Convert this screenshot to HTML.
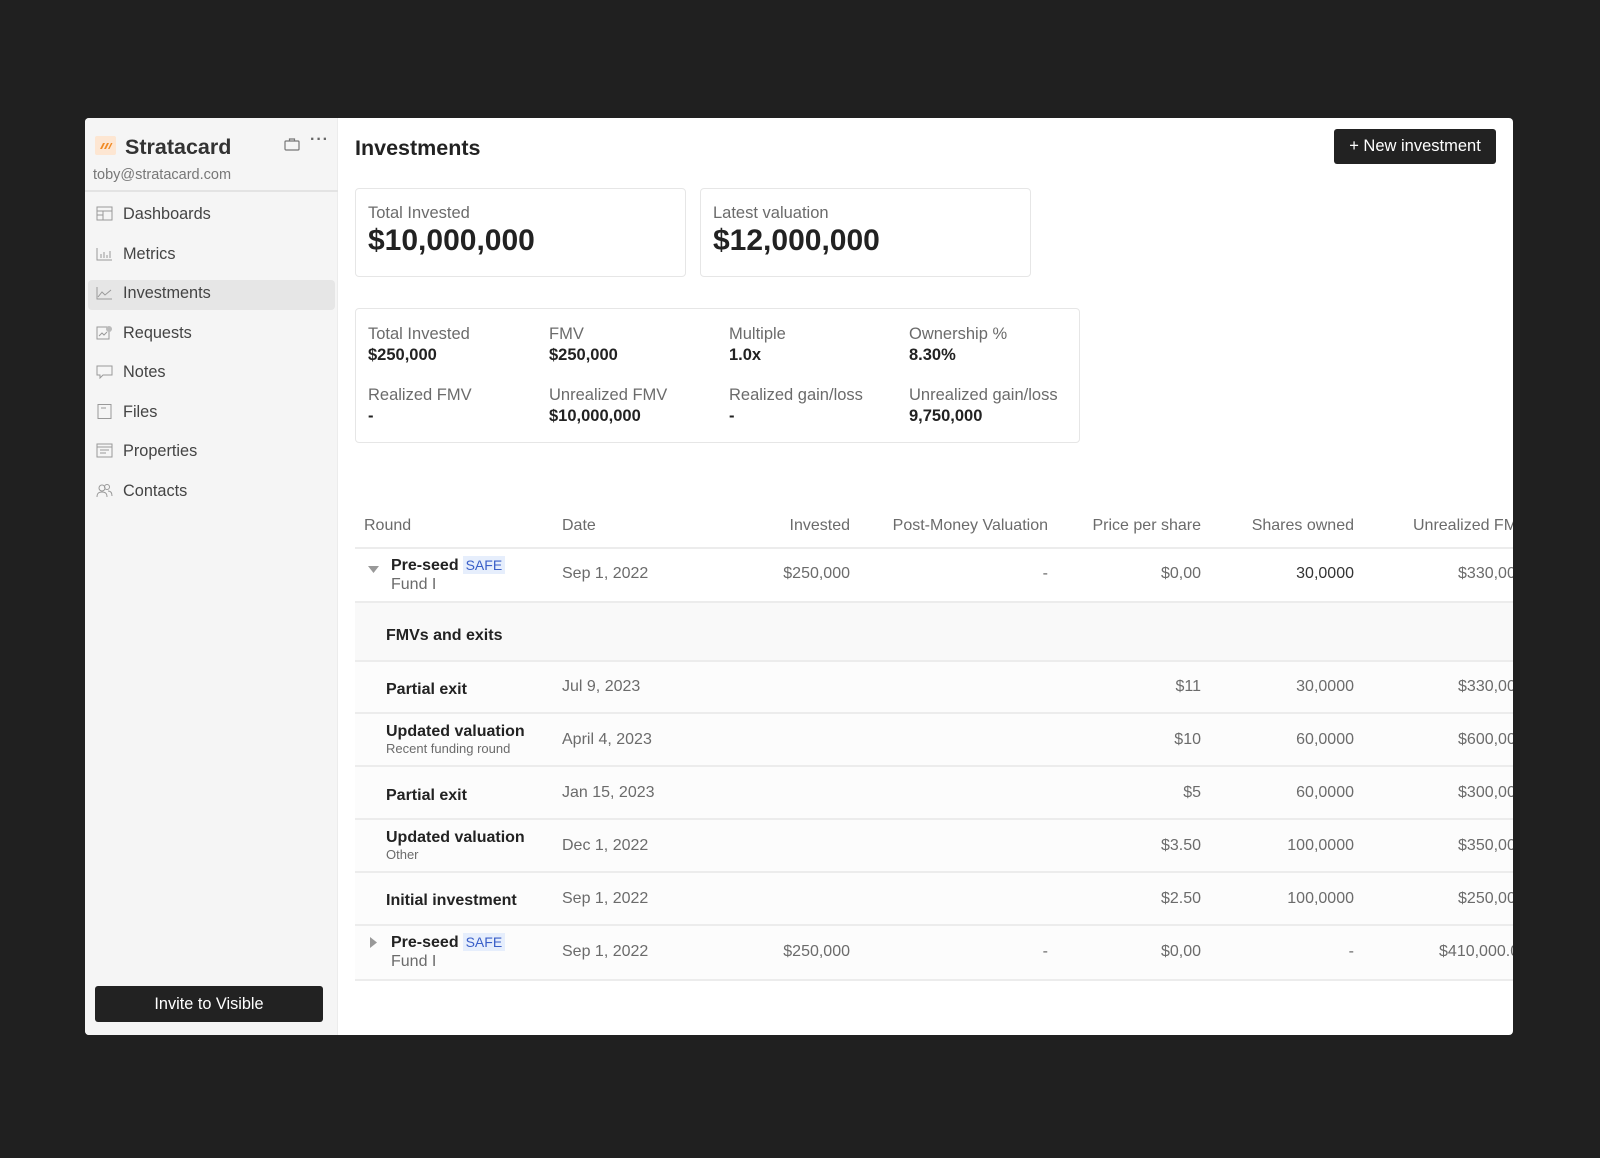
<!DOCTYPE html>
<html><head><meta charset="utf-8"><style>
*{margin:0;padding:0;box-sizing:border-box}
body{width:1600px;height:1158px;background:#202020;font-family:"Liberation Sans",sans-serif;position:relative;overflow:hidden}
#p{position:absolute;left:85px;top:118px;width:1428px;height:917px;background:#fff;border-radius:4px;overflow:hidden}
#sb{position:absolute;left:0;top:0;width:253px;height:917px;background:#f5f5f5;border-right:1px solid #ececec}
.a{position:absolute;white-space:nowrap;line-height:20px}
.r{text-align:right}
.g{color:#6b6b6b}
.d{color:#222}
.b{font-weight:bold}
.nav{position:absolute;left:38px;font-size:16.3px;color:#444;line-height:20px}
.ic{position:absolute;left:11px;width:17px;height:15px}
.line{position:absolute;left:270px;width:1160px;height:2px;background:#ececec}
.card{position:absolute;border:1px solid #e6e6e6;border-radius:4px;background:#fff}
.safe{background:#e6eefc;color:#3a5fc8;font-size:14px;padding:1px 3px;margin-left:4px;font-weight:normal}
.t{font-size:16px}
.lb{font-size:16.5px}
.vl{font-size:16.5px}
</style></head><body>
<div id="p">
<div id="sb">
  <svg style="position:absolute;left:10px;top:18px" width="21" height="19" viewBox="0 0 21 19"><rect width="21" height="19" rx="2" fill="#fde6d2"/><path d="M5 13l3-6h2l-3 6zM9 13l3-6h2l-3 6zM13 13l3-6h1.5l-3 6z" fill="#f08a24"/></svg>
  <div class="a" style="left:40px;top:16px;font-size:21.5px;font-weight:bold;color:#333;line-height:26px">Stratacard</div>
  <svg style="position:absolute;left:199px;top:19px" width="16" height="14" viewBox="0 0 16 14"><rect x="1" y="4" width="14" height="9" rx="1" fill="none" stroke="#777" stroke-width="1.2"/><path d="M5.5 4V2h5v2" fill="none" stroke="#777" stroke-width="1.2"/></svg>
  <div class="a" style="left:225px;top:12px;font-size:16px;color:#666;letter-spacing:1px;font-weight:bold">···</div>
  <div class="a" style="left:8px;top:47px;font-size:14.5px;color:#777">toby@stratacard.com</div>
  <div style="position:absolute;left:0;top:72px;width:253px;height:2px;background:#e3e3e3"></div>
  <div style="position:absolute;left:3px;top:162px;width:247px;height:30px;background:#e6e6e6;border-radius:4px"></div>
  <svg class="ic" style="top:88px" viewBox="0 0 17 15"><rect x="1" y="1" width="15" height="13" fill="none" stroke="#999"/><path d="M1 5h15M7 5v9M1 9h6" stroke="#999" fill="none"/></svg>
  <div class="nav" style="top:86px">Dashboards</div>
  <svg class="ic" style="top:128px" viewBox="0 0 17 15"><path d="M1 2v12h15M5 12V8M8 12V6M11 12V9M14 12V5" stroke="#999" fill="none"/></svg>
  <div class="nav" style="top:126px">Metrics</div>
  <svg class="ic" style="top:167px" viewBox="0 0 17 15"><path d="M1 2v12h15M2 12l4-5 3 3 6-5" stroke="#999" fill="none"/></svg>
  <div class="nav" style="top:165px">Investments</div>
  <svg class="ic" style="top:207px" viewBox="0 0 17 15"><rect x="1" y="2" width="12" height="12" fill="none" stroke="#999"/><circle cx="13" cy="4" r="3" fill="#bbb"/><path d="M3 11l3-3 2 2 3-3" stroke="#999" fill="none"/></svg>
  <div class="nav" style="top:205px">Requests</div>
  <svg class="ic" style="top:246px" viewBox="0 0 17 15"><path d="M1 2h15v9H7l-3 3v-3H1z" stroke="#999" fill="none"/></svg>
  <div class="nav" style="top:244px">Notes</div>
  <svg class="ic" style="top:286px" viewBox="0 0 17 15"><rect x="2" y="0.5" width="13" height="14" fill="none" stroke="#999"/><path d="M5 4h5" stroke="#999"/></svg>
  <div class="nav" style="top:284px">Files</div>
  <svg class="ic" style="top:325px" viewBox="0 0 17 15"><rect x="1" y="1" width="15" height="13" fill="none" stroke="#999"/><path d="M1 4h15M4 7h9M4 10h6" stroke="#999" fill="none"/></svg>
  <div class="nav" style="top:323px">Properties</div>
  <svg class="ic" style="top:365px" viewBox="0 0 17 15"><circle cx="6" cy="5" r="3" fill="none" stroke="#999"/><circle cx="11" cy="4" r="2.5" fill="none" stroke="#999"/><path d="M1 14c0-4 2-5 5-5s5 1 5 5M12 8c2 0 4 1 4 5" stroke="#999" fill="none"/></svg>
  <div class="nav" style="top:363px">Contacts</div>
  <div style="position:absolute;left:10px;top:868px;width:228px;height:36px;background:#222;border-radius:3px;color:#fff;font-size:16.3px;text-align:center;line-height:36px">Invite to Visible</div>
</div>

<div class="a d b" style="left:270px;top:17px;font-size:21.5px;line-height:26px">Investments</div>
<div style="position:absolute;left:1249px;top:11px;width:162px;height:35px;background:#222;border-radius:3px;color:#fff;font-size:16.5px;text-align:center;line-height:35px">+ New investment</div>

<div class="card" style="left:270px;top:70px;width:331px;height:89px"></div>
<div class="card" style="left:615px;top:70px;width:331px;height:89px"></div>
<div class="a g lb" style="left:283px;top:85px">Total Invested</div>
<div class="a d b" style="left:283px;top:105px;font-size:30px;line-height:36px">$10,000,000</div>
<div class="a g lb" style="left:628px;top:85px">Latest valuation</div>
<div class="a d b" style="left:628px;top:105px;font-size:30px;line-height:36px">$12,000,000</div>

<div class="card" style="left:270px;top:190px;width:725px;height:135px"></div>
<div class="a g lb" style="left:283px;top:206px">Total Invested</div>
<div class="a d b vl" style="left:283px;top:227px">$250,000</div>
<div class="a g lb" style="left:464px;top:206px">FMV</div>
<div class="a d b vl" style="left:464px;top:227px">$250,000</div>
<div class="a g lb" style="left:644px;top:206px">Multiple</div>
<div class="a d b vl" style="left:644px;top:227px">1.0x</div>
<div class="a g lb" style="left:824px;top:206px">Ownership %</div>
<div class="a d b vl" style="left:824px;top:227px">8.30%</div>
<div class="a g lb" style="left:283px;top:267px">Realized FMV</div>
<div class="a d b vl" style="left:283px;top:288px">-</div>
<div class="a g lb" style="left:464px;top:267px">Unrealized FMV</div>
<div class="a d b vl" style="left:464px;top:288px">$10,000,000</div>
<div class="a g lb" style="left:644px;top:267px">Realized gain/loss</div>
<div class="a d b vl" style="left:644px;top:288px">-</div>
<div class="a g lb" style="left:824px;top:267px">Unrealized gain/loss</div>
<div class="a d b vl" style="left:824px;top:288px">9,750,000</div>

<!-- table -->
<div style="position:absolute;left:270px;top:484px;width:1160px;height:378px;background:#fcfcfc"></div>
<div style="position:absolute;left:270px;top:484px;width:1160px;height:59px;background:#f9f9f9"></div>
<div class="line" style="top:429px"></div>
<div class="line" style="top:483px"></div>
<div class="line" style="top:542px"></div>
<div class="line" style="top:594px"></div>
<div class="line" style="top:647px"></div>
<div class="line" style="top:700px"></div>
<div class="line" style="top:753px"></div>
<div class="line" style="top:806px"></div>
<div class="line" style="top:861px"></div>

<div class="a g t" style="left:279px;top:398px">Round</div>
<div class="a g t" style="left:477px;top:398px">Date</div>
<div class="a g t r" style="left:565px;width:200px;top:398px">Invested</div>
<div class="a g t r" style="left:763px;width:200px;top:398px">Post-Money Valuation</div>
<div class="a g t r" style="left:916px;width:200px;top:398px">Price per share</div>
<div class="a g t r" style="left:1069px;width:200px;top:398px">Shares owned</div>
<div class="a g t" style="left:1328px;top:398px">Unrealized FMV</div>

<!-- row 1 -->
<svg style="position:absolute;left:283px;top:448px" width="11" height="7"><path d="M0 0h11L5.5 7z" fill="#999"/></svg>
<div class="a d b t" style="left:306px;top:437px">Pre-seed<span class="safe">SAFE</span></div>
<div class="a g t" style="left:306px;top:457px">Fund I</div>
<div class="a g t" style="left:477px;top:446px">Sep 1, 2022</div>
<div class="a g t r" style="left:565px;width:200px;top:446px">$250,000</div>
<div class="a g t r" style="left:763px;width:200px;top:446px">-</div>
<div class="a g t r" style="left:916px;width:200px;top:446px">$0,00</div>
<div class="a t r" style="left:1069px;width:200px;top:446px;color:#333">30,0000</div>
<div class="a g t r" style="left:1262px;width:200px;top:446px">$330,000.00</div>

<div class="a d b t" style="left:301px;top:508px">FMVs and exits</div>

<div class="a d b t" style="left:301px;top:562px">Partial exit</div>
<div class="a g t" style="left:477px;top:559px">Jul 9, 2023</div>
<div class="a g t r" style="left:916px;width:200px;top:559px">$11</div>
<div class="a g t r" style="left:1069px;width:200px;top:559px">30,0000</div>
<div class="a g t r" style="left:1262px;width:200px;top:559px">$330,000.00</div>

<div class="a d b t" style="left:301px;top:604px">Updated valuation</div>
<div class="a g" style="left:301px;top:621px;font-size:13px">Recent funding round</div>
<div class="a g t" style="left:477px;top:612px">April 4, 2023</div>
<div class="a g t r" style="left:916px;width:200px;top:612px">$10</div>
<div class="a g t r" style="left:1069px;width:200px;top:612px">60,0000</div>
<div class="a g t r" style="left:1262px;width:200px;top:612px">$600,000.00</div>

<div class="a d b t" style="left:301px;top:668px">Partial exit</div>
<div class="a g t" style="left:477px;top:665px">Jan 15, 2023</div>
<div class="a g t r" style="left:916px;width:200px;top:665px">$5</div>
<div class="a g t r" style="left:1069px;width:200px;top:665px">60,0000</div>
<div class="a g t r" style="left:1262px;width:200px;top:665px">$300,000.00</div>

<div class="a d b t" style="left:301px;top:710px">Updated valuation</div>
<div class="a g" style="left:301px;top:727px;font-size:13px">Other</div>
<div class="a g t" style="left:477px;top:718px">Dec 1, 2022</div>
<div class="a g t r" style="left:916px;width:200px;top:718px">$3.50</div>
<div class="a g t r" style="left:1069px;width:200px;top:718px">100,0000</div>
<div class="a g t r" style="left:1262px;width:200px;top:718px">$350,000.00</div>

<div class="a d b t" style="left:301px;top:773px">Initial investment</div>
<div class="a g t" style="left:477px;top:771px">Sep 1, 2022</div>
<div class="a g t r" style="left:916px;width:200px;top:771px">$2.50</div>
<div class="a g t r" style="left:1069px;width:200px;top:771px">100,0000</div>
<div class="a g t r" style="left:1262px;width:200px;top:771px">$250,000.00</div>

<svg style="position:absolute;left:285px;top:819px" width="7" height="11"><path d="M0 0v11l7-5.5z" fill="#999"/></svg>
<div class="a d b t" style="left:306px;top:814px">Pre-seed<span class="safe">SAFE</span></div>
<div class="a g t" style="left:306px;top:834px">Fund I</div>
<div class="a g t" style="left:477px;top:824px">Sep 1, 2022</div>
<div class="a g t r" style="left:565px;width:200px;top:824px">$250,000</div>
<div class="a g t r" style="left:763px;width:200px;top:824px">-</div>
<div class="a g t r" style="left:916px;width:200px;top:824px">$0,00</div>
<div class="a g t r" style="left:1069px;width:200px;top:824px">-</div>
<div class="a g t r" style="left:1243px;width:200px;top:824px">$410,000.00</div>
</div>
</body></html>
